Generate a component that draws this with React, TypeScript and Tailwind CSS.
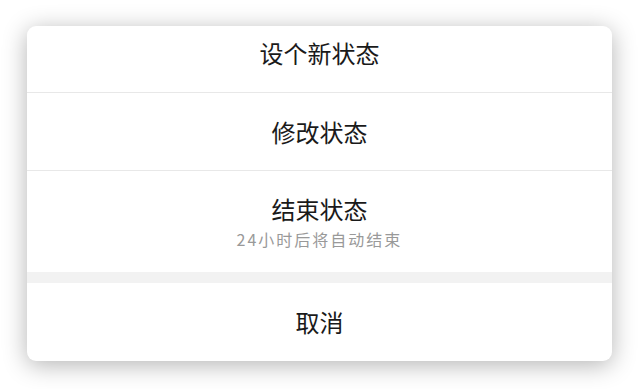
import React from "react";

const font = { fontFamily: '"Noto Sans CJK SC", "Noto Sans", sans-serif' };

export default function App() {
  return (
    <div className="w-[640px] h-[389px] bg-white pl-[27px] pt-[26px]" style={font}>
      <div className="w-[585px] rounded-[9px] bg-white overflow-hidden shadow-[0_4px_24px_rgba(0,0,0,0.3)]">
        <div className="h-[67px] pb-[12px] flex items-center justify-center text-[24px] text-[#1a1a1a] border-b border-[#e8e8e8]">
          设个新状态
        </div>
        <div className="h-[78px] flex items-center justify-center text-[24px] text-[#1a1a1a] border-b border-[#e8e8e8]">
          修改状态
        </div>
        <div className="h-[101px] pt-[23px] flex flex-col items-center">
          <div className="text-[24px] leading-[30px] text-[#1a1a1a]">结束状态</div>
          <div className="mt-[5px] text-[16px] leading-[20px] tracking-[2px] text-[#999999]">
            24小时后将自动结束
          </div>
        </div>
        <div className="h-[11px] bg-[#f2f2f2]" />
        <div className="h-[78px] flex items-center justify-center text-[24px] text-[#1a1a1a]">
          取消
        </div>
      </div>
    </div>
  );
}
